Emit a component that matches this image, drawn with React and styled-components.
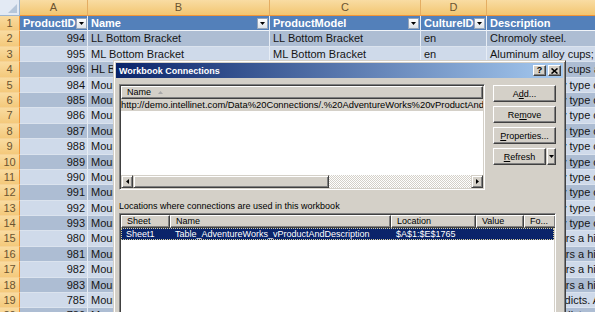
import styled, { createGlobalStyle } from 'styled-components'

const GlobalStyle = createGlobalStyle`
  html, body { margin: 0; padding: 0; }
  body {
    width: 595px;
    height: 312px;
    overflow: hidden;
    background: #fff;
    font-family: "Liberation Sans", Arial, sans-serif;
  }
`;

const COLS = [68, 182, 151, 66, 260];
const LETTERS = ['A', 'B', 'C', 'D', 'E'];
const HEADERS = ['ProductID', 'Name', 'ProductModel', 'CultureID', 'Description'];

const M500 = 'Suitable for any type of riding, on or off-road. Fits any budget. Smooth-shifting with a comfortable ride.';
const M400 = 'This bike delivers a high-level of performance on a budget. It is responsive and maneuverable.';
const M300 = 'For true trail addicts. An extremely durable bike that will go anywhere.';

const ROWS = [
  [994, 'LL Bottom Bracket', 'LL Bottom Bracket', 'en', 'Chromoly steel.'],
  [995, 'ML Bottom Bracket', 'ML Bottom Bracket', 'en', 'Aluminum alloy cups; large diameter spindle.'],
  [996, 'HL Bottom Bracket', 'HL Bottom Bracket', 'en', 'Aluminum alloy cups and a hollow axle.'],
  [984, 'Mountain-500 Silver, 40', 'Mountain-500', 'en', M500],
  [985, 'Mountain-500 Silver, 42', 'Mountain-500', 'en', M500],
  [986, 'Mountain-500 Silver, 44', 'Mountain-500', 'en', M500],
  [987, 'Mountain-500 Silver, 48', 'Mountain-500', 'en', M500],
  [988, 'Mountain-500 Silver, 52', 'Mountain-500', 'en', M500],
  [989, 'Mountain-500 Black, 40', 'Mountain-500', 'en', M500],
  [990, 'Mountain-500 Black, 42', 'Mountain-500', 'en', M500],
  [991, 'Mountain-500 Black, 44', 'Mountain-500', 'en', M500],
  [992, 'Mountain-500 Black, 48', 'Mountain-500', 'en', M500],
  [993, 'Mountain-500 Black, 52', 'Mountain-500', 'en', M500],
  [980, 'Mountain-400-W Silver, 38', 'Mountain-400-W', 'en', M400],
  [981, 'Mountain-400-W Silver, 40', 'Mountain-400-W', 'en', M400],
  [982, 'Mountain-400-W Silver, 42', 'Mountain-400-W', 'en', M400],
  [983, 'Mountain-400-W Silver, 46', 'Mountain-400-W', 'en', M400],
  [785, 'Mountain-300 Black, 38', 'Mountain-300', 'en', M300],
  [786, 'Mountain-300 Black, 40', 'Mountain-300', 'en', M300],
];

const LOC_COLS = [
  { label: 'Sheet', w: 49 },
  { label: 'Name', w: 221 },
  { label: 'Location', w: 85 },
  { label: 'Value', w: 48 },
  { label: 'Fo...', w: 32 },
];

/* ---------- spreadsheet ---------- */

const Sheet = styled.div`
  position: relative;
  width: 595px;
  height: 312px;
  overflow: hidden;
`;

const LetterRow = styled.div`
  display: flex;
  height: 16px;
`;

const Corner = styled.div`
  position: relative;
  width: 20px;
  flex: none;
  box-sizing: border-box;
  background: #e3eaf4;
  border-right: 1px solid #9fb6cf;
  border-bottom: 1px solid #9fb6cf;
  &::after {
    content: '';
    position: absolute;
    right: 2px;
    bottom: 2px;
    border-left: 9px solid transparent;
    border-bottom: 9px solid #b5c6da;
  }
`;

const ColLetter = styled.div`
  width: ${p => p.$w}px;
  flex: none;
  box-sizing: border-box;
  background: linear-gradient(#f9dca3, #f2c671);
  border-right: 1px solid #e4ad62;
  border-bottom: 1px solid #f29536;
  color: #6b5431;
  font-size: 11px;
  line-height: 15px;
  text-align: center;
`;

const Row = styled.div`
  display: flex;
  height: 15.4px;
`;

const RowNum = styled.div`
  width: 20px;
  flex: none;
  box-sizing: border-box;
  background: linear-gradient(#f9dba0, #f4c97b);
  border-right: 1px solid #f29536;
  border-bottom: 1px solid #f6d293;
  color: #6b5431;
  font-size: 11px;
  line-height: 14.4px;
  text-align: center;
`;

const Cell = styled.div`
  width: ${p => p.$w}px;
  flex: none;
  box-sizing: border-box;
  background: ${p => (p.$dark ? '#adbdd3' : '#cfdaea')};
  border-right: 1px solid #e7edf5;
  border-bottom: 1px solid #dbe3ee;
  color: #151515;
  font-size: 11px;
  line-height: 14.4px;
  padding: 0 ${p => (p.$num ? '2px' : '3px')};
  text-align: ${p => (p.$num ? 'right' : 'left')};
  white-space: nowrap;
  overflow: hidden;
`;

const HeadCell = styled(Cell)`
  display: flex;
  align-items: center;
  justify-content: space-between;
  background: #5380ba;
  color: #fff;
  font-weight: bold;
  padding-right: 1px;
  border-bottom-color: #f0f4f9;
`;

const FilterBtn = styled.span`
  width: 11px;
  height: 11px;
  flex: none;
  box-sizing: border-box;
  border: 1px solid #95a5ba;
  background: linear-gradient(#ffffff, #dde2e8);
  display: flex;
  align-items: center;
  justify-content: center;
`;

/* ---------- dialog ---------- */

const Dialog = styled.div`
  position: absolute;
  left: 113px;
  top: 60px;
  width: 453px;
  height: 264px;
  box-sizing: border-box;
  display: flex;
  flex-direction: column;
  padding: 2px;
  background: #d4d0c8;
  border: 1px solid;
  border-color: #d4d0c8 #404040 #404040 #d4d0c8;
  box-shadow: inset 1px 1px #fff, inset -1px -1px #808080;
  font-family: "Liberation Sans", Tahoma, sans-serif;
  font-size: 9px;
  color: #000;
`;

const TitleBar = styled.div`
  height: 15px;
  flex: none;
  display: flex;
  align-items: center;
  justify-content: space-between;
  padding: 0 2px 0 3px;
  background: linear-gradient(to right, #0a246a, #a6caf0);
`;

const Title = styled.span`
  color: #fff;
  font-weight: bold;
  font-size: 9px;
`;

const TitleButtons = styled.div`
  display: flex;
  gap: 2px;
`;

const TitleBtn = styled.span`
  width: 13px;
  height: 11px;
  box-sizing: border-box;
  display: flex;
  align-items: center;
  justify-content: center;
  background: #d4d0c8;
  border: 1px solid;
  border-color: #fff #404040 #404040 #fff;
  box-shadow: inset -1px -1px #808080;
  font-weight: bold;
  font-size: 9px;
  line-height: 1;
`;

const Body = styled.div`
  flex: 1;
  display: flex;
  flex-direction: column;
  padding: 6px 7px 0 3px;
  min-height: 0;
`;

const TopRow = styled.div`
  display: flex;
  gap: 8px;
`;

const ListBox = styled.div`
  box-sizing: border-box;
  display: flex;
  flex-direction: column;
  overflow: hidden;
  background: #fff;
  border: 1px solid;
  border-color: #808080 #fff #fff #808080;
  box-shadow: inset 1px 1px #404040, inset -1px -1px #d4d0c8;
  padding: 1px;
  width: ${p => (p.$w ? `${p.$w}px` : 'auto')};
  height: ${p => (p.$h ? `${p.$h}px` : 'auto')};
  flex: ${p => (p.$grow ? 1 : 'none')};
`;

const HeaderRow = styled.div`
  display: flex;
  height: 13px;
  flex: none;
`;

const ColHead = styled.div`
  width: ${p => (p.$w ? `${p.$w}px` : 'auto')};
  flex: ${p => (p.$w ? 'none' : 1)};
  box-sizing: border-box;
  display: flex;
  align-items: center;
  gap: 7px;
  padding-left: 5px;
  background: #d4d0c8;
  border: 1px solid;
  border-color: #fff #404040 #404040 #fff;
  box-shadow: inset -1px -1px #808080;
  line-height: 11px;
  white-space: nowrap;
  overflow: hidden;
`;

const UrlRow = styled.div`
  height: 12px;
  line-height: 12px;
  font-size: 9.4px;
  background: #d4d0c8;
  white-space: nowrap;
  overflow: hidden;
`;

const Spacer = styled.div`
  flex: 1;
`;

const HScroll = styled.div`
  display: flex;
  height: 13px;
  flex: none;
`;

const Raised = styled.div`
  box-sizing: border-box;
  display: flex;
  align-items: center;
  justify-content: center;
  background: #d4d0c8;
  border: 1px solid;
  border-color: #d4d0c8 #404040 #404040 #d4d0c8;
  box-shadow: inset 1px 1px #fff, inset -1px -1px #808080;
  width: ${p => p.$w}px;
  flex: none;
`;

const Track = styled.div`
  flex: 1;
  background: repeating-conic-gradient(#ffffff 0 25%, #d4d0c8 0 50%) 0 0 / 2px 2px;
`;

const ButtonCol = styled.div`
  width: 63px;
  display: flex;
  flex-direction: column;
  gap: 4px;
  padding-top: 1px;
`;

const Button = styled.div`
  height: 17px;
  box-sizing: border-box;
  display: flex;
  align-items: center;
  justify-content: center;
  background: #d4d0c8;
  border: 1px solid;
  border-color: #fff #404040 #404040 #fff;
  box-shadow: inset -1px -1px #808080;
  white-space: nowrap;
  flex: ${p => (p.$grow ? 1 : 'none')};
  width: ${p => (p.$w ? `${p.$w}px` : 'auto')};
`;

const Split = styled.div`
  display: flex;
  gap: 1px;
`;

const Label = styled.div`
  margin: 10px 0 1px 0;
  height: 12px;
  line-height: 12px;
  white-space: nowrap;
`;

const SelRow = styled.div`
  display: flex;
  height: 12px;
  flex: none;
  background: #0a246a;
  color: #fff;
  outline: 1px dotted #d8cf9a;
  outline-offset: -1px;
`;

const SelCell = styled.div`
  width: ${p => p.$w}px;
  flex: none;
  box-sizing: border-box;
  padding-left: 5px;
  line-height: 12px;
  white-space: nowrap;
  overflow: hidden;
`;

const Down = ({ c = '#000' }) => (
  <svg width="5" height="3" viewBox="0 0 5 3"><path d="M0 0H5L2.5 3Z" fill={c} /></svg>
);

const Up = () => (
  <svg width="5" height="3" viewBox="0 0 5 3"><path d="M0 3H5L2.5 0Z" fill="#a8a8a8" /></svg>
);

const Left = () => (
  <svg width="3" height="5" viewBox="0 0 3 5"><path d="M3 0V5L0 2.5Z" fill="#000" /></svg>
);

const Right = () => (
  <svg width="3" height="5" viewBox="0 0 3 5"><path d="M0 0V5L3 2.5Z" fill="#000" /></svg>
);

const CloseX = () => (
  <svg width="7" height="6" viewBox="0 0 7 6">
    <path d="M0.5 0.5L6.5 5.5M6.5 0.5L0.5 5.5" stroke="#000" strokeWidth="1.6" />
  </svg>
);

export default function App() {
  return (
    <>
      <GlobalStyle />
      <Sheet>
        <LetterRow>
          <Corner />
          {LETTERS.map((l, i) => (
            <ColLetter key={l} $w={COLS[i]}>{l}</ColLetter>
          ))}
        </LetterRow>
        <Row>
          <RowNum>1</RowNum>
          {HEADERS.map((h, i) => (
            <HeadCell key={h} $w={COLS[i]}>
              <span>{h}</span>
              <FilterBtn><Down /></FilterBtn>
            </HeadCell>
          ))}
        </Row>
        {ROWS.map((r, ri) => (
          <Row key={ri}>
            <RowNum>{ri + 2}</RowNum>
            {r.map((v, ci) => (
              <Cell key={ci} $w={COLS[ci]} $num={ci === 0} $dark={ri % 2 === 0}>{v}</Cell>
            ))}
          </Row>
        ))}

        <Dialog>
          <TitleBar>
            <Title>Workbook Connections</Title>
            <TitleButtons>
              <TitleBtn>?</TitleBtn>
              <TitleBtn><CloseX /></TitleBtn>
            </TitleButtons>
          </TitleBar>
          <Body>
            <TopRow>
              <ListBox $w={366} $h={106}>
                <HeaderRow>
                  <ColHead>Name <Up /></ColHead>
                </HeaderRow>
                <UrlRow>http://demo.intellinet.com/Data%20Connections/.%20AdventureWorks%20vProductAndDescription.odc</UrlRow>
                <Spacer />
                <HScroll>
                  <Raised $w={12}><Left /></Raised>
                  <Raised $w={196} />
                  <Track />
                  <Raised $w={12}><Right /></Raised>
                </HScroll>
              </ListBox>
              <ButtonCol>
                <Button>A<u>d</u>d...</Button>
                <Button>Re<u>m</u>ove</Button>
                <Button><u>P</u>roperties...</Button>
                <Split>
                  <Button $grow><u>R</u>efresh</Button>
                  <Button $w={9}><Down /></Button>
                </Split>
              </ButtonCol>
            </TopRow>
            <Label>Locations where connections are used in this workbook</Label>
            <ListBox $grow>
              <HeaderRow>
                {LOC_COLS.map(c => (
                  <ColHead key={c.label} $w={c.w}>{c.label}</ColHead>
                ))}
              </HeaderRow>
              <SelRow>
                <SelCell $w={49}>Sheet1</SelCell>
                <SelCell $w={221}>Table_AdventureWorks_vProductAndDescription</SelCell>
                <SelCell $w={85}>$A$1:$E$1765</SelCell>
                <SelCell $w={48}></SelCell>
                <SelCell $w={32}></SelCell>
              </SelRow>
            </ListBox>
          </Body>
        </Dialog>
      </Sheet>
    </>
  );
}
